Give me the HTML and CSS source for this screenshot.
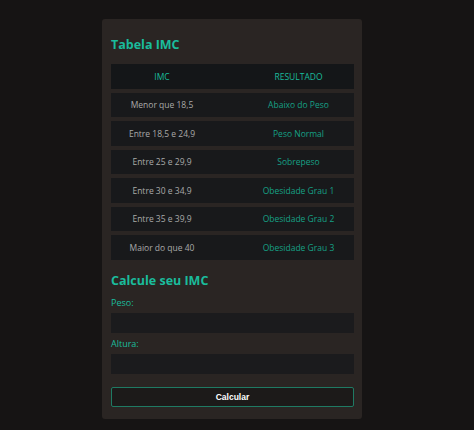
FILE: index.html
```html
<!DOCTYPE html>
<html lang="pt-BR">
<head>
<meta charset="utf-8">
<link rel="stylesheet" href="styles.css">
</head>
<body>
<div class="card">
  <h2 class="title">Tabela IMC</h2>
  <table class="tabela">
    <thead>
      <tr><th class="c1">IMC</th><th class="c2">RESULTADO</th></tr>
    </thead>
    <tbody>
      <tr><td class="c1">Menor que 18,5</td><td class="c2">Abaixo do Peso</td></tr>
      <tr><td class="c1">Entre 18,5 e 24,9</td><td class="c2">Peso Normal</td></tr>
      <tr><td class="c1">Entre 25 e 29,9</td><td class="c2">Sobrepeso</td></tr>
      <tr><td class="c1">Entre 30 e 34,9</td><td class="c2">Obesidade Grau 1</td></tr>
      <tr><td class="c1">Entre 35 e 39,9</td><td class="c2">Obesidade Grau 2</td></tr>
      <tr><td class="c1">Maior do que 40</td><td class="c2">Obesidade Grau 3</td></tr>
    </tbody>
  </table>
  <h2 class="title title2">Calcule seu IMC</h2>
  <form class="form">
    <label class="label">Peso:</label>
    <input class="input" type="text">
    <label class="label">Altura:</label>
    <input class="input" type="text">
    <button class="btn" type="button">Calcular</button>
  </form>
</div>
</body>
</html>
```
FILE: styles.css
```css
html, body {
  margin: 0;
  padding: 0;
  background: #161414;
  font-family: "Open Sans", sans-serif;
}
.card {
  width: 243px;
  margin: 19px 0 0 102px;
  padding: 16px 8px 12px 9px;
  background: #2a2523;
  border-radius: 3px;
}
.title {
  margin: 0 0 9px 0;
  font-size: 12.5px;
  font-weight: 700;
  color: #1abc9c;
  line-height: 20px;
}
.tabela {
  width: 100%;
  border-collapse: separate;
  border-spacing: 0 4px;
  margin: -4px 0 -4px 0;
  font-size: 8.5px;
}
.tabela th, .tabela td {
  height: 24.5px;
  padding: 0;
  text-align: center;
  font-weight: 400;
}
.tabela th {
  background: #141618;
  color: #1abc9c;
}
.tabela td {
  background: #18191b;
}
.c1 { width: 102px; }
.c2 { padding-left: 30px !important; }
.tabela td.c1 { color: #a9a9a9; }
.tabela td.c2 { color: #16a085; }
.title2 {
  margin-top: 11px;
  margin-bottom: 6px;
}
.form {
  display: flex;
  flex-direction: column;
}
.label {
  font-size: 9px;
  color: #1abc9c;
  line-height: 12px;
  margin-bottom: 4px;
}
.input {
  height: 20px;
  box-sizing: border-box;
  border: none;
  background: #1b1b1d;
  margin: 0 0 5px 0;
  padding: 0 6px;
  outline: none;
}
.btn {
  margin-top: 8px;
  height: 20px;
  background: #1c1a19;
  border: 1px solid #1f7a63;
  border-radius: 2px;
  color: #ffffff;
  font-family: "Liberation Sans", Arial, sans-serif;
  font-weight: 700;
  font-size: 8.5px;
}
```
